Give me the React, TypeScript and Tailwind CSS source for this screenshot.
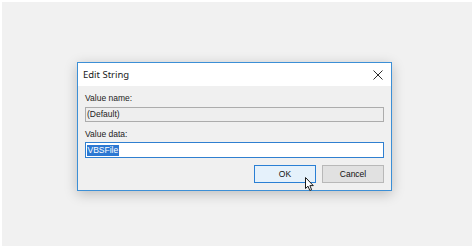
import React from "react";

const labelFont = { fontFamily: '"Liberation Sans", Arial, sans-serif' };

function CloseIcon() {
  return (
    <svg width="10" height="10" viewBox="0 0 10 10" className="block">
      <path d="M0.5 0.5 L9.5 9.5 M9.5 0.5 L0.5 9.5" stroke="#2b2b2b" strokeWidth="1" />
    </svg>
  );
}

function Cursor() {
  return (
    <svg width="10" height="15" viewBox="0 0 10 15" className="block">
      <path
        d="M0.5 0.5 L0.5 11.5 L3 9.2 L4.8 13.5 L6.6 12.7 L4.9 8.6 L8.3 8.6 Z"
        fill="#ffffff"
        stroke="#1a1a1a"
        strokeWidth="1"
        strokeLinejoin="round"
      />
    </svg>
  );
}

export default function App() {
  return (
    <div className="w-[474px] h-[248px] bg-white p-[2px]">
      <div className="w-full h-full bg-[#f1f1f1] pl-[75px] pt-[60px]">
        <div
          className="relative w-[315px] h-[129px] flex flex-col border border-[#3c8fd6] bg-[#f0f0f0] shadow-[0_3px_12px_rgba(0,0,0,0.22)]"
          style={labelFont}
        >
          <div className="h-[23px] bg-white flex items-center justify-between pl-[5px] pr-[8px]">
            <span
              className="text-[9.5px] text-[#1a1a1a] leading-none"
              style={{ fontFamily: '"Noto Sans", "Open Sans", sans-serif' }}
            >
              Edit String
            </span>
            <CloseIcon />
          </div>

          <div className="flex flex-col px-[7px] pt-[7px]">
            <div className="h-[10px] text-[8.5px] leading-[10px] text-[#222]">Value name:</div>
            <div className="mt-[4px] h-[15px] border border-[#acacac] bg-[#eeeeee] flex items-center px-[1px] text-[8.5px] text-[#222]">
              (Default)
            </div>
            <div className="mt-[7px] h-[10px] text-[8.5px] leading-[10px] text-[#222]">Value data:</div>
            <div className="mt-[3px] h-[16px] border border-[#2f7fd0] bg-white flex items-center px-[1px] text-[8.5px]">
              <span className="bg-[#2c78d2] text-white px-[0.5px] leading-[11px]">VBSFile</span>
            </div>
            <div className="mt-[7px] flex justify-end gap-[6px]">
              <button className="w-[62px] h-[18px] border border-[#2a7fd4] bg-[#e5f1fb] text-[8.5px] text-[#111]">
                OK
              </button>
              <button className="w-[62px] h-[18px] border border-[#b8b8b8] bg-[#e1e1e1] text-[8.5px] text-[#111]">
                Cancel
              </button>
            </div>
          </div>

          <div className="absolute left-[227px] top-[114px]">
            <Cursor />
          </div>
        </div>
      </div>
    </div>
  );
}
